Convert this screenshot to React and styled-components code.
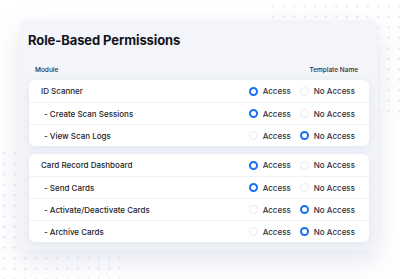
import React from 'react';
import styled, { createGlobalStyle } from 'styled-components';

const GlobalStyle = createGlobalStyle`
	html, body {
		margin: 0;
		padding: 0;
		background: #ffffff;
	}
	body {
		font-family: 'Inter', 'Noto Sans', sans-serif;
		-webkit-font-smoothing: antialiased;
	}
`;

const Page = styled.div`
	position: relative;
	width: 400px;
	height: 279px;
	overflow: hidden;
	background: #ffffff;
	padding: 20px 0 0 20px;
	box-sizing: border-box;

	&::before,
	&::after {
		content: '';
		position: absolute;
		background-image: radial-gradient(circle, #dcdfe8 0.8px, transparent 1.2px);
		background-size: 10.5px 10.5px;
		z-index: 0;
	}
	&::before {
		top: 1px;
		left: 268px;
		width: 132px;
		height: 116px;
	}
	&::after {
		top: 148px;
		left: -1px;
		width: 124px;
		height: 131px;
	}
`;

const Panel = styled.div`
	position: relative;
	z-index: 1;
	width: 358px;
	box-sizing: border-box;
	padding: 11px 9px 8px 9px;
	background: #f4f5fa;
	border-radius: 8px;
	box-shadow: 0 10px 26px rgba(196, 200, 225, 0.45);
`;

const Title = styled.h1`
	margin: 0 0 0 -1px;
	font-size: 13px;
	line-height: 18px;
	font-weight: 700;
	color: #14141c;
	letter-spacing: -0.1px;
`;

const HeaderRow = styled.div`
	display: flex;
	justify-content: space-between;
	align-items: center;
	height: 12px;
	margin: 15px 0 4px;
	padding: 0 11px 0 6px;
	font-size: 6.5px;
	font-weight: 500;
	color: #2a2a35;
`;

const Card = styled.div`
	background: #ffffff;
	border-radius: 6px;
	box-shadow: 0 2px 8px rgba(190, 195, 220, 0.35);
	& + & {
		margin-top: 8px;
	}
`;

const Row = styled.div`
	display: flex;
	align-items: center;
	justify-content: space-between;
	box-sizing: border-box;
	height: 22px;
	padding: 0 14px 0 ${({ sub }) => (sub ? '15px' : '12px')};
	& + & {
		border-top: 1px solid #f1f2f6;
	}
`;

const Label = styled.span`
	font-size: 8px;
	font-weight: 500;
	color: #1d1d27;
`;

const Options = styled.div`
	display: flex;
	align-items: center;
	gap: 9px;
`;

const Option = styled.label`
	display: flex;
	align-items: center;
	gap: 5px;
	font-size: 8px;
	font-weight: 500;
	color: #30303a;
`;

const Radio = styled.span`
	width: 9px;
	height: 9px;
	box-sizing: border-box;
	border-radius: 50%;
	background: #fff;
	border: ${({ checked }) => (checked ? '2.5px solid #1a70f0' : '1px solid #e9e9ef')};
`;

const modules = [
	{
		rows: [
			{ name: 'ID Scanner', access: true },
			{ name: 'Create Scan Sessions', sub: true, access: true },
			{ name: 'View Scan Logs', sub: true, access: false },
		],
	},
	{
		rows: [
			{ name: 'Card Record Dashboard', access: true },
			{ name: 'Send Cards', sub: true, access: true },
			{ name: 'Activate/Deactivate Cards', sub: true, access: false },
			{ name: 'Archive Cards', sub: true, access: false },
		],
	},
];

const PermissionRow = ({ name, sub, access }) => (
	<Row sub={sub}>
		<Label>{sub ? `-  ${name}` : name}</Label>
		<Options>
			<Option>
				<Radio checked={access} />
				Access
			</Option>
			<Option>
				<Radio checked={!access} />
				No Access
			</Option>
		</Options>
	</Row>
);

export default function App() {
	return (
		<>
			<GlobalStyle />
			<Page>
				<Panel>
					<Title>Role-Based Permissions</Title>
					<HeaderRow>
						<span>Module</span>
						<span>Template Name</span>
					</HeaderRow>
					{modules.map((m, i) => (
						<Card key={i}>
							{m.rows.map(r => (
								<PermissionRow key={r.name} {...r} />
							))}
						</Card>
					))}
				</Panel>
			</Page>
		</>
	);
}
